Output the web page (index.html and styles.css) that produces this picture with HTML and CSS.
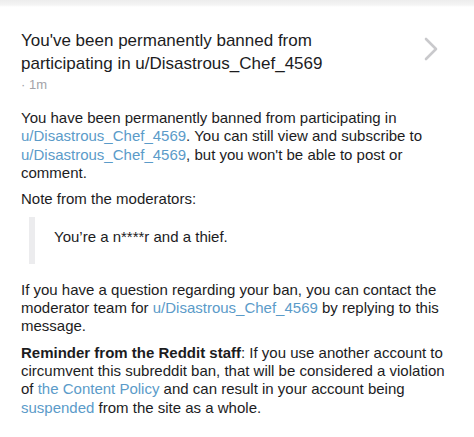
FILE: index.html
```html
<!DOCTYPE html>
<html lang="en">
<head>
  <meta charset="UTF-8">
  <meta name="viewport" content="width=device-width, initial-scale=1.0">
  <title>Inbox - Message</title>
  <link rel="stylesheet" href="styles.css">
</head>
<body>
  <div class="top-bar"></div>

  <div class="message">
    <div class="message-head">
      <div class="head-text">
        <h1>You've been permanently banned from participating in u/Disastrous_Chef_4569</h1>
        <div class="meta">&middot; 1m</div>
      </div>
      <svg class="chevron" width="16" height="26" viewBox="0 0 16 26">
        <path d="M3 3 L13 13 L3 23" fill="none" stroke="#c9c9cc" stroke-width="2.6" stroke-linecap="round" stroke-linejoin="round"/>
      </svg>
    </div>

    <div class="message-body">
      <p>
        You have been permanently banned from participating in
        <a href="#">u/Disastrous_Chef_4569</a>. You can still view and subscribe to
        <a href="#">u/Disastrous_Chef_4569</a>, but you won't be able to post or
        comment.
      </p>
      <p>Note from the moderators:</p>
      <blockquote>You’re a n****r and a thief.</blockquote>
      <p>
        If you have a question regarding your ban, you can contact the
        moderator team for <a href="#">u/Disastrous_Chef_4569</a> by replying to this
        message.
      </p>
      <p>
        <strong>Reminder from the Reddit staff</strong>: If you use another account to
        circumvent this subreddit ban, that will be considered a violation
        of <a href="#">the Content Policy</a> and can result in your account being
        <a href="#">suspended</a> from the site as a whole.
      </p>
    </div>
  </div>
</body>
</html>
```

FILE: styles.css
```css
:root {
  --text: #1c1c1e;
  --text-muted: #a3a3a8;
  --link: #5b9bc9;
  --quote-bar: #ececee;
}

* {
  margin: 0;
  padding: 0;
  box-sizing: border-box;
}

body {
  font-family: "Liberation Sans", Arial, sans-serif;
  background-color: #ffffff;
  color: var(--text);
  width: 474px;
  height: 437px;
  overflow: hidden;
}

.top-bar {
  height: 7px;
  background: linear-gradient(#ededed, #f4f4f4 70%, #ffffff);
}

.message {
  padding: 22px 0 0 21px;
}

.message-head {
  display: flex;
  align-items: flex-start;
  justify-content: space-between;
}

.head-text {
  width: 360px;
}

h1 {
  font-size: 17px;
  font-weight: 400;
  line-height: 23px;
}

.meta {
  font-size: 13px;
  color: var(--text-muted);
  margin-top: 2px;
  line-height: 16px;
}

.chevron {
  margin: 7px 35px 0 0;
}

.message-body {
  margin-top: 16px;
  width: 440px;
  font-size: 15px;
  line-height: 18.3px;
}

.message-body p {
  margin-bottom: 8px;
}

.message-body a {
  color: var(--link);
  text-decoration: none;
}

blockquote {
  border-left: 6px solid var(--quote-bar);
  margin: 9px 0 17px 8px;
  padding: 11px 0 17px 19px;
}
```
